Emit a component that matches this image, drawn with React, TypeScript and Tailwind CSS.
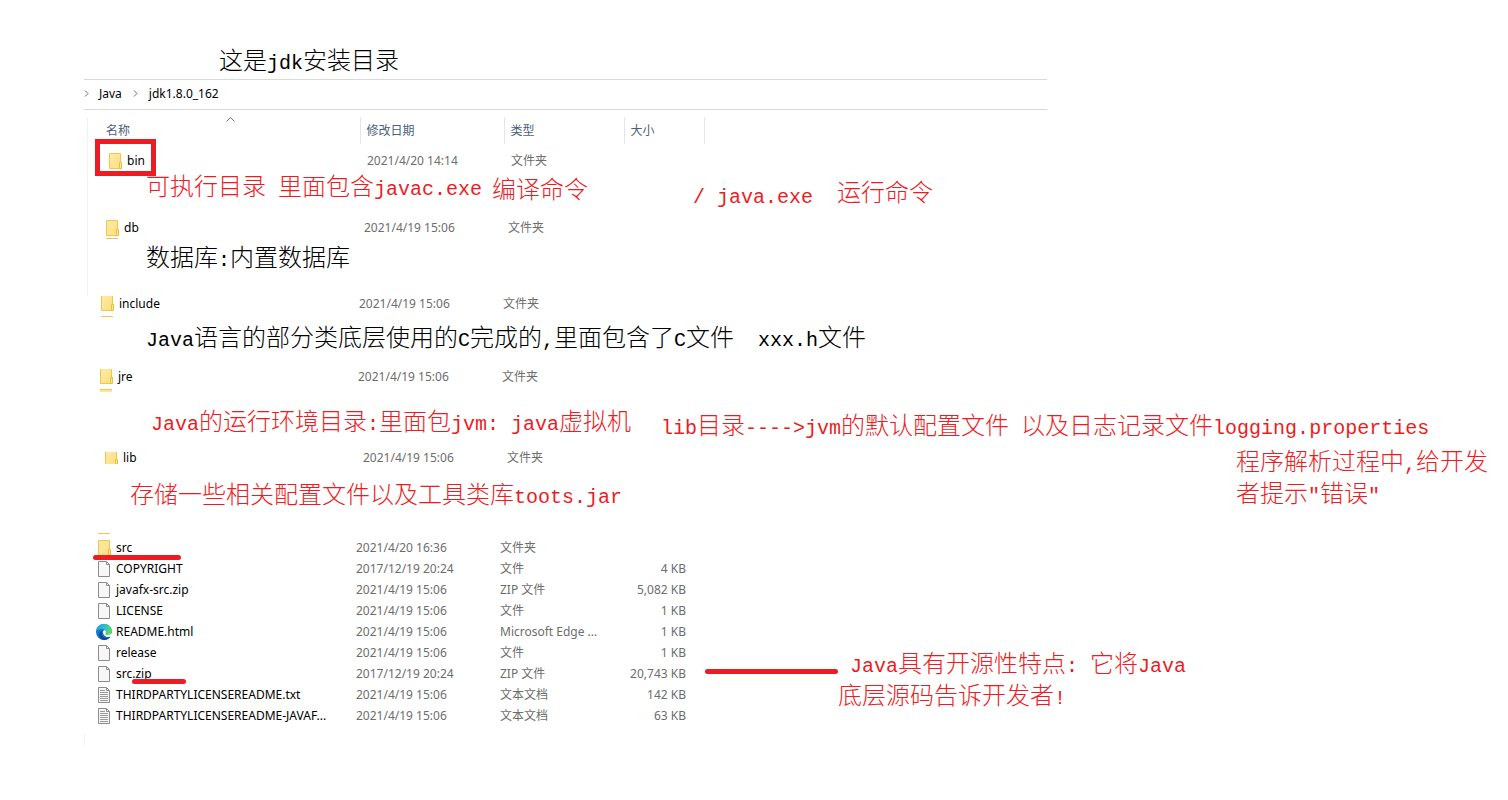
import type { ReactNode } from 'react';

type IconKind = 'folder' | 'folder-open-top' | 'folder-middle' | 'file' | 'text' | 'edge';

type Entry = {
  icon: IconKind;
  name: string;
  date: string;
  type: string;
  size?: string;
  underline?: boolean;
  tailUnderline?: boolean;
};

const FILES: Entry[] = [
  { icon: 'folder', name: 'src', date: '2021/4/20 16:36', type: '文件夹', underline: true },
  { icon: 'file', name: 'COPYRIGHT', date: '2017/12/19 20:24', type: '文件', size: '4 KB' },
  { icon: 'file', name: 'javafx-src.zip', date: '2021/4/19 15:06', type: 'ZIP 文件', size: '5,082 KB' },
  { icon: 'file', name: 'LICENSE', date: '2021/4/19 15:06', type: '文件', size: '1 KB' },
  { icon: 'edge', name: 'README.html', date: '2021/4/19 15:06', type: 'Microsoft Edge ...', size: '1 KB' },
  { icon: 'file', name: 'release', date: '2021/4/19 15:06', type: '文件', size: '1 KB' },
  { icon: 'file', name: 'src.zip', date: '2017/12/19 20:24', type: 'ZIP 文件', size: '20,743 KB', tailUnderline: true },
  { icon: 'text', name: 'THIRDPARTYLICENSEREADME.txt', date: '2021/4/19 15:06', type: '文本文档', size: '142 KB' },
  { icon: 'text', name: 'THIRDPARTYLICENSEREADME-JAVAF...', date: '2021/4/19 15:06', type: '文本文档', size: '63 KB' },
];

// The view box decides which edges of the folder are visible.
function FolderIcon({ top = 0, height = 16 }: { top?: number; height?: number }) {
  return (
    <svg width="14" height={height} viewBox={`0 ${top} 14 ${height}`} aria-hidden="true">
      <defs>
        <linearGradient id="folder-fill" x1="0" y1="0" x2="1" y2="1">
          <stop offset="0" stopColor="#ffeba8" />
          <stop offset="1" stopColor="#ffde7c" />
        </linearGradient>
      </defs>
      <path d="M.5.5h11v15H.5z" fill="url(#folder-fill)" stroke="#ecc850" />
      <path d="M10.500 9.500h2v6h-2z" fill="#ffe596" stroke="#e8c040" />
    </svg>
  );
}

function FileIcon({ lines }: { lines?: boolean }) {
  return (
    <svg width="12" height="16" viewBox="0 0 12 16" aria-hidden="true">
      <path d="M.5.5h8l3 3v12H.5z" fill="#f7f7f7" stroke="#8c8c8c" />
      <path d="M8.500.5v3h3" fill="none" stroke="#8c8c8c" />
      {lines && <path d="M2 3.500h5M2 5.500h8M2 7.500h8M2 9.500h8M2 11.500h8M2 13.500h8" stroke="#9a9a9a" />}
    </svg>
  );
}

function EdgeIcon() {
  return (
    <svg className="-ml-0.5" width="16" height="16" viewBox="0 0 16 16" aria-hidden="true">
      <defs>
        <linearGradient id="edge-top" x1="0" y1="0" x2="1" y2=".4">
          <stop offset="0" stopColor="#1b9de2" />
          <stop offset=".6" stopColor="#2fc2c8" />
          <stop offset="1" stopColor="#62d957" />
        </linearGradient>
      </defs>
      <circle cx="8" cy="8" r="8" fill="#0f78d0" />
      <path d="M.1 7.200C.6 3 4 0 8 0c4.600 0 8 3.300 8 6.900 0 2.400-1.900 4.100-4.200 4.100-1.900 0-2.600-.7-2.300-1.300.9-1.400.3-4.600-3.500-4.600C3 5.100.6 6.500.1 7.200z" fill="url(#edge-top)" />
      <path d="M6.600 6.400C5 8.600 5.600 13.400 10.200 13.700c1.800.1 3.400-.4 4.500-1.400-1.300 2.200-3.800 3.700-6.700 3.700-3-.3-5-2.700-5-5.300 0-2 1.400-3.700 3.600-4.300z" fill="#134a94" />
      <path d="M7 8c0-1.200 1-1.900 1.900-1.700 1 .4 1.300 2.400.6 3.400-.3.600.4 1.300 2.300 1.300 1.600 0 3-.7 3.700-2 .7 1 .5 2.600-.3 3.600C11 14 7 11.800 7 8z" fill="#fff" />
    </svg>
  );
}

function EntryIcon({ kind }: { kind: IconKind }) {
  if (kind === 'folder') return <FolderIcon />;
  if (kind === 'folder-open-top') return <FolderIcon top={1} height={15} />;
  if (kind === 'folder-middle') return <FolderIcon top={2} height={12} />;
  if (kind === 'edge') return <EdgeIcon />;
  return <FileIcon lines={kind === 'text'} />;
}

function Listing({ entries, header, boxed }: { entries: Entry[]; header?: boolean; boxed?: boolean }) {
  return (
    <table className="w-[603px] shrink-0 table-fixed text-xs leading-4 text-[#6d6d6d]">
      <colgroup>
        <col className="w-[259px]" />
        <col className="w-36" />
        <col className="w-[120px]" />
        <col className="w-20" />
      </colgroup>
      {header && (
        <thead className="text-left text-[#4c607a]">
          <tr className="h-[27px]">
            <th className="relative border-r border-[#e5e5e5] pl-[5px] font-normal">
              名称
              <svg className="absolute top-0 left-[125px]" width="9" height="5" viewBox="0 0 9 5" aria-hidden="true">
                <path d="M.5 4.500l4-4 4 4" fill="none" stroke="#6d6d6d" />
              </svg>
            </th>
            <th className="border-r border-[#e5e5e5] pl-1.5 font-normal">修改日期</th>
            <th className="border-r border-[#e5e5e5] pl-1.5 font-normal">类型</th>
            <th className="border-r border-[#e5e5e5] pl-1.5 font-normal">大小</th>
          </tr>
        </thead>
      )}
      <tbody>
        {entries.map((entry) => (
          <tr key={entry.name} className={header ? 'h-[27px]' : 'h-[21px]'}>
            <td className={header ? 'relative pt-1.5 pl-2' : 'relative pl-2'}>
              <div className="flex items-center whitespace-nowrap text-black">
                <span className="flex w-[18px] shrink-0">
                  <EntryIcon kind={entry.icon} />
                </span>
                {entry.name}
              </div>
              {boxed && <span className="absolute -top-[5px] -left-1.5 h-[37px] w-[61px] border-[5px] border-[#ed1c24]" />}
              {entry.underline && <span className="absolute top-[18px] left-[3px] h-[5px] w-[88px] rounded-full bg-[#ed1c24]" />}
              {entry.tailUnderline && <span className="absolute top-4 left-[42px] h-[5px] w-[54px] rounded-full bg-[#ed1c24]" />}
            </td>
            <td className={header ? 'pt-1.5 pl-[7px]' : 'pl-[7px]'}>{entry.date}</td>
            <td className={header ? 'pt-1.5 pl-[7px]' : 'pl-[7px]'}>{entry.type}</td>
            <td className="pr-[7px] text-right">{entry.size}</td>
          </tr>
        ))}
      </tbody>
    </table>
  );
}

function folder(name: string, icon: IconKind = 'folder', date = '2021/4/19 15:06'): Entry[] {
  return [{ icon, name, date, type: '文件夹' }];
}

// Latin runs are set in a monospace face whose advance is half a CJK character.
function Mixed({ children }: { children: string }) {
  return children.split(/([\x20-\x7e]+)/).map((run, i) =>
    i % 2 ? (
      <span key={i} className="font-['Liberation_Mono',monospace] text-xl leading-0">
        {run}
      </span>
    ) : (
      run
    ),
  );
}

function Note({ children, className }: { children: ReactNode; className: string }) {
  return <p className={`text-2xl font-light whitespace-pre ${className}`}>{children}</p>;
}

// Top edge of the next folder icon, cut off below a listing row.
function Sliver({ className }: { className: string }) {
  return <div className={`w-3 border-t border-[#ecc850] bg-[#ffe596] ${className}`} />;
}

export default function App() {
  return (
    <main className="min-h-screen overflow-x-hidden bg-white pl-[84px] font-['Noto_Sans','Noto_Sans_CJK_SC',sans-serif] text-black">
      <Note className="ml-[135px] pt-12 pb-[7px] leading-6">
        <Mixed>这是jdk安装目录</Mixed>
      </Note>

      <nav className="flex h-[31px] max-w-[963px] items-center border-y border-[#d9d9d9] pb-0.5 text-xs">
        <svg width="5" height="7" viewBox="0 0 5 7" aria-hidden="true">
          <path d="M1 .5l3 3-3 3" fill="none" stroke="#6d6d6d" />
        </svg>
        <a href="#java" className="ml-2.5">Java</a>
        <svg className="mx-[11px]" width="5" height="7" viewBox="0 0 5 7" aria-hidden="true">
          <path d="M1 .5l3 3-3 3" fill="none" stroke="#6d6d6d" />
        </svg>
        <a href="#jdk">jdk1.8.0_162</a>
      </nav>

      <div className="mt-[7px] ml-[3px] border-l border-[#f2f2f2] pb-[27px]">
        <div className="ml-[13px]">
          <Listing entries={folder('bin', 'folder', '2021/4/20 14:14')} header boxed />
        </div>
        <div className="mt-[3px] ml-[58px] flex text-[#ed1c24]">
          <Note className="leading-6"><Mixed>可执行目录 里面包含javac.exe</Mixed></Note>
          <Note className="mt-[3px] ml-2.5 leading-6">编译命令</Note>
          <Note className="mt-2 ml-[105px] leading-6"><Mixed>/ java.exe</Mixed></Note>
          <Note className="mt-1.5 ml-6 leading-6">运行命令</Note>
        </div>
        <div className="mt-[11px] ml-2.5">
          <Listing entries={folder('db')} />
          <Sliver className="ml-2" />
        </div>
        <Note className="mt-1.5 ml-[58px] leading-6"><Mixed>数据库:内置数据库</Mixed></Note>
      </div>

      <div className="-mt-[3px] ml-[9px]">
        <Listing entries={folder('include', 'folder-open-top')} />
        <Sliver className="mt-0.5 ml-2" />
      </div>
      <Note className="mt-2 ml-[62px] leading-6">
        <Mixed>Java语言的部分类底层使用的C完成的,里面包含了C文件  xxx.h文件</Mixed>
      </Note>

      <div className="mt-[17px] ml-2">
        <Listing entries={folder('jre', 'folder-open-top')} />
        <Sliver className="mt-0.5 ml-2 h-[3px]" />
      </div>
      <div className="mt-[17px] ml-[67px] flex text-[#ed1c24]">
        <Note className="leading-6"><Mixed>Java的运行环境目录:里面包jvm: java虚拟机</Mixed></Note>
        <Note className="mt-1 ml-[30px] leading-6">
          <Mixed>{'lib目录---->jvm的默认配置文件 以及日志记录文件logging.properties'}</Mixed>
        </Note>
      </div>

      <div className="mt-2 flex justify-between pr-5">
        <div>
          <div className="mt-0.5 ml-[13px]">
            <Listing entries={folder('lib', 'folder-middle')} />
          </div>
          <Note className="mt-[14px] ml-[46px] leading-6 text-[#ed1c24]">
            <Mixed>存储一些相关配置文件以及工具类库toots.jar</Mixed>
          </Note>
        </div>
        <Note className="leading-8 text-[#ed1c24]">
          <Mixed>程序解析过程中,给开发</Mixed>
          <br />
          <Mixed>者提示"错误"</Mixed>
        </Note>
      </div>

      <div className="mt-6 ml-1.5">
        <Sliver className="ml-2" />
        <div className="mt-[3px] flex items-end">
          <Listing entries={FILES} />
          <div className="mb-[52px] ml-3 h-[5px] w-[133px] shrink-0 rounded-full bg-[#ed1c24]" />
          <Note className="pb-[15px] leading-8 text-[#ed1c24]">
            <Mixed> Java具有开源性特点: 它将Java</Mixed>
            <br />
            <Mixed>底层源码告诉开发者!</Mixed>
          </Note>
        </div>
      </div>
      <div className="mt-[7px] h-3 border-l border-[#f2f2f2]" />
    </main>
  );
}
